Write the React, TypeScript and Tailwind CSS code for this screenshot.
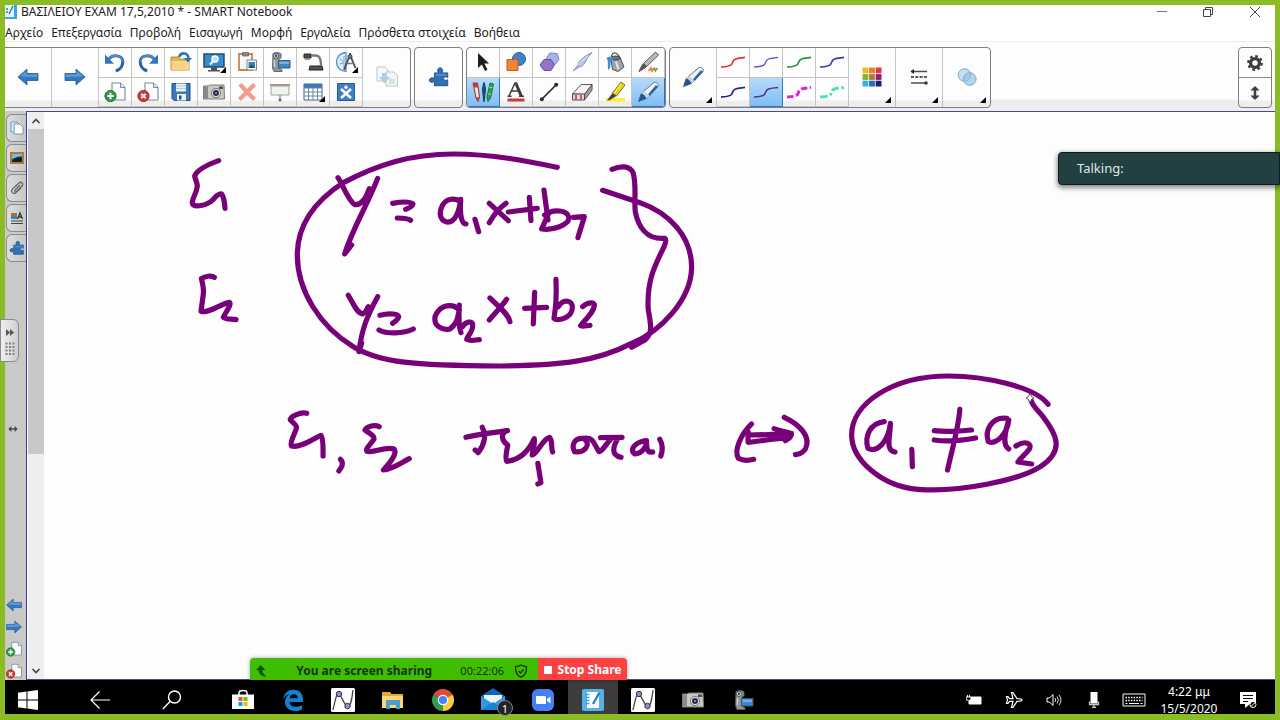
import type { ReactNode } from "react";

type IconProps = { children: ReactNode; className?: string; box?: string };

function Glyph({ children, className = "size-6", box = "0 0 24 24" }: IconProps) {
  return (
    <svg viewBox={box} className={className} fill="none" aria-hidden="true">
      {children}
    </svg>
  );
}

const arrowBody = "M2 12 11 4v4.5h11v7H11V20Z";

const ArrowLeft = ({ className }: { className?: string }) => (
  <Glyph className={className}>
    <path d={arrowBody} fill="#3578bd" stroke="#245a94" strokeWidth=".8" />
    <path d="M4 11.5 10.3 6v3.4h11V12Z" fill="#5d9ad6" />
  </Glyph>
);

const ArrowRight = ({ className }: { className?: string }) => (
  <Glyph className={className}>
    <g transform="matrix(-1 0 0 1 24 0)">
      <path d={arrowBody} fill="#3578bd" stroke="#245a94" strokeWidth=".8" />
      <path d="M4 11.5 10.3 6v3.4h11V12Z" fill="#5d9ad6" />
    </g>
  </Glyph>
);

const undoPath = (
  <>
    <path d="M5.5 9.5C9 4.500 19.500 4 19.800 12c0 4.500-3 7.500-7 9" stroke="#2a64a3" strokeWidth="3" />
    <path d="M5.500 9C9 4.200 19 4 19.300 12" stroke="#4f90d2" strokeWidth="1.600" />
    <path d="M2 4.500v9.200h9Z" fill="#3474b8" />
  </>
);
const Undo = () => <Glyph>{undoPath}</Glyph>;
const Redo = () => (
  <Glyph>
    <g transform="matrix(-1 0 0 1 24 0)">{undoPath}</g>
  </Glyph>
);

const sheet = (
  <>
    <path d="M9 3h8.500l4.500 4.500V20H9Z" fill="#fbfcfd" stroke="#7b8a96" strokeWidth="1.100" />
    <path d="M17.500 3v4.500H22" stroke="#7b8a96" fill="#dde6ec" />
  </>
);
const PageAdd = ({ className }: { className?: string }) => (
  <Glyph className={className}>
    {sheet}
    <circle cx="7.500" cy="16" r="5.600" fill="#2f9a4a" stroke="#1d6f31" />
    <path d="M7.500 12.800v6.400M4.300 16h6.400" stroke="#fff" strokeWidth="1.900" />
  </Glyph>
);
const PageDelete = ({ className }: { className?: string }) => (
  <Glyph className={className}>
    {sheet}
    <circle cx="7.500" cy="16" r="5.600" fill="#d23c30" stroke="#9c241b" />
    <path d="m5.300 13.800 4.400 4.400m0-4.400-4.400 4.400" stroke="#fff" strokeWidth="1.900" />
  </Glyph>
);
const FolderOpen = () => (
  <Glyph>
    <path d="M2 7h7l2 2h9v11H2Z" fill="#e3b352" stroke="#b58a33" />
    <path d="M2.500 11H20v9H2.500Z" fill="#f6d588" />
    <path d="M10 7c2-5 9-5 9.500 1.500" stroke="#2f74b6" strokeWidth="2.600" />
    <path d="M15 8h8l-4 4.500Z" fill="#2f74b6" />
  </Glyph>
);
const Save = () => (
  <Glyph>
    <path d="M3 3.500h18v17H5l-2-2Z" fill="#3b78bc" stroke="#234e81" />
    <path d="M7 3.500h10v8H7Z" fill="#eaf1f7" />
    <path d="M8 14h9v6.500H8Z" fill="#f1f4f7" />
    <path d="M10 15.500h2.500v4H10Z" fill="#274f80" />
    <path d="M7 6h10M7 8.500h10" stroke="#a4bfd9" strokeWidth=".8" />
  </Glyph>
);
const Monitor = () => (
  <Glyph>
    <path d="M2 4h20v13H2Z" fill="#2f8fd0" stroke="#2c4963" strokeWidth="1.500" />
    <path d="M9 17h6v3H9ZM6 20h12v1.500H6Z" fill="#4a5662" />
    <circle cx="13" cy="9" r="3" fill="#bfe3f7" stroke="#fff" strokeWidth="1.500" />
    <path d="M11 11.500 8 14.500" stroke="#fff" strokeWidth="2" />
  </Glyph>
);
const Camera = () => (
  <Glyph>
    <path d="M1.500 6h5l1-1H22l.5 14h-21Z" fill="#c8c8c5" stroke="#7b7b78" />
    <path d="M2 6.500h4v12H2Z" fill="#8a8a88" />
    <path d="M17 6.500h4v2.500h-4Z" fill="#454d54" />
    <circle cx="14" cy="13" r="4.600" fill="#e4e4e2" stroke="#73736f" />
    <circle cx="14" cy="13" r="3" fill="#252d44" />
    <circle cx="14" cy="13" r="1.100" fill="#839bd0" />
  </Glyph>
);
const Paste = () => (
  <Glyph>
    <path d="M4 4h13v16H4Z" fill="#f6f7f7" stroke="#c9854b" strokeWidth="1.800" />
    <path d="M7.500 2.500h6v3.500h-6Z" fill="#7f8992" stroke="#59626a" strokeWidth=".7" />
    <path d="M12 10h9.500v10H12Z" fill="#fff" stroke="#7d8791" />
    <path d="M13.500 12h6.500v6h-6.500Z" fill="#3286c8" />
    <path d="m13.500 18 3-3.500 3.500 3.500Z" fill="#234d40" />
  </Glyph>
);
const Cross = () => (
  <Glyph>
    <path d="M4 5.500 6.500 3.500 12 9.500l6-6L20.500 6l-6 6 6 6-2.500 2.500-6-6-6 6L3.500 18l6-6Z" fill="#f0a08d" stroke="#e08872" strokeWidth=".7" />
  </Glyph>
);
const Camcorder = () => (
  <Glyph>
    <path d="M5 3.500C8 2 12 2.500 13 4v4l-2 1v9l3 2v1.500H6L4.500 18Z" fill="#8d959a" stroke="#555e63" strokeWidth=".9" />
    <circle cx="8" cy="5.800" r="2.600" fill="#dde3e7" stroke="#4c555b" />
    <circle cx="8" cy="5.800" r="1.200" fill="#2b3b4c" />
    <path d="M6.500 10v7" stroke="#cdd3d6" strokeWidth="1.500" />
    <path d="M10.500 10.500H22V18H10.500Z" fill="#3c86cd" stroke="#49545e" />
    <path d="M11.500 11.500H21v2.500h-9.500Z" fill="#6fb1e8" />
  </Glyph>
);
const Easel = () => (
  <Glyph>
    <path d="M2 4h20v2H2Z" fill="#a3957c" />
    <path d="M3 6h18v9H3Z" fill="#eff6f1" stroke="#9fa69c" />
    <path d="M12 15v5" stroke="#82858a" strokeWidth="1.200" />
    <circle cx="12" cy="20" r="1.500" fill="#65696d" />
  </Glyph>
);
const DocCamera = () => (
  <Glyph>
    <path d="M3 4h7v4H3Z" fill="#4b4b4b" stroke="#2c2c2c" />
    <path d="M10 5.500h5c4 0 5 4 5 10" stroke="#777" strokeWidth="2.300" />
    <path d="M9 16h12l1 4H8Z" fill="#555" stroke="#222" />
    <path d="M4 9.500h5" stroke="#999" />
  </Glyph>
);
const TableIcon = () => (
  <Glyph>
    <path d="M3 4h18v16H3Z" fill="#fff" stroke="#44678c" />
    <path d="M3 4h18v4H3Z" fill="#3b78bc" />
    <path d="M3 8h18M3 12h18M3 16h18M7.500 8v12M12 8v12M16.500 8v12" stroke="#6a87a5" />
  </Glyph>
);
const Measure = () => (
  <Glyph>
    <path d="M12 2.500a9.500 9.500 0 0 0 0 19Z" fill="#dbeaf5" stroke="#5a90bd" strokeWidth="1.300" />
    <path d="M10 6v12M6 9l4 3M5.500 14l4-1" stroke="#79a7cd" />
    <path d="M16 3v4M15.500 6 10 20M16.500 6l5 12" stroke="#4d4d4d" strokeWidth="1.900" />
    <path d="M13 13.500h7" stroke="#777" strokeWidth="1.300" />
    <circle cx="16" cy="6.500" r="2" fill="#777" stroke="#444" />
  </Glyph>
);
const ShapeX = () => (
  <Glyph>
    <path d="M3.500 3.500h17v17h-17Z" fill="#3c7fc4" stroke="#265a92" />
    <path d="m7 9 10 9M17 9 7 18" stroke="#fff" strokeWidth="2.600" />
    <circle cx="12" cy="7.300" r="1.700" fill="#fff" />
  </Glyph>
);
const PagesFaded = () => (
  <Glyph className="size-6">
    <g opacity=".5">
      <path d="M2 2h8l3 3v11H2Z" fill="#eef2f4" stroke="#84939d" />
      <path d="M11 7h8l3.500 3.500V21H11Z" fill="#e6eef1" stroke="#84939d" />
      <path d="M7 8h5v4h3.500L9.500 18.500 4 12h3Z" fill="#66a0c8" />
      <path d="M14 14h6v5h-6Z" fill="#a8cdbb" />
    </g>
  </Glyph>
);
const Puzzle = ({ className }: { className?: string }) => (
  <Glyph className={className}>
    <path
      d="M7 7.500h4.500C9.500 4.500 11 2 13.200 2s3.800 2.500 1.800 5.500h6.500v5c-2.500-1.500-4.500-.5-4.500 1.200s2 2.800 4.500 1.300V21.500H7V17c-2.500 1.500-5.500 1-5.500-1.500S4.500 12 7 13.500Z"
      fill="#2f6fb2"
      stroke="#1d4f88"
    />
    <path d="M8 8.500h12.500v2.500H8Z" fill="#4d8ccb" />
  </Glyph>
);
const Pointer = () => (
  <Glyph>
    <path d="M7 3v15l3.800-3.500L14 21l2.500-1.200L13.300 13.500H18Z" fill="#1c1c1c" />
  </Glyph>
);
const Shapes = () => (
  <Glyph>
    <circle cx="15" cy="9" r="6.500" fill="#3f82c6" stroke="#27609c" />
    <path d="M3 9.500h11v11H3Z" fill="#f08436" stroke="#c95b14" />
  </Glyph>
);
const Polygons = () => (
  <Glyph>
    <path d="m13 3 7 .5 2 6-4 5h-6L9.500 8Z" fill="#a5b4ec" stroke="#7182c6" />
    <path d="M7 9.500h7l3.500 5.500L14 20.500H7L3 15Z" fill="#9670c9" stroke="#6a4b9c" />
  </Glyph>
);
const Quill = () => (
  <Glyph>
    <path d="M22 2.500C17 5 8.500 9.500 8 15l-5 6 6-4c5-.5 7-6 8-8.500Z" fill="#b7c3d9" stroke="#8594b1" />
    <path d="M18 6C14 9 10.500 12 8.500 15" stroke="#e8edf5" />
  </Glyph>
);
const Bucket = () => (
  <Glyph>
    <path d="M8 9 17 7l4 10-6 4.500-5.500-2Z" fill="#9da3a6" stroke="#4e5558" />
    <path d="m12 12 2.500 8 2-1L14 11Z" fill="#dde1e3" />
    <ellipse cx="12.500" cy="8" rx="4.800" ry="2" fill="#6d7477" stroke="#43494c" />
    <path d="M8.500 8C8 3.500 11 2 13.500 3.500S16.500 7 17 8" stroke="#4e5558" strokeWidth="1.200" />
    <path d="M3.500 8c2-2 6-1.500 9.500.5-4 .5-5 2-5.500 5 0 3-.5 5.500-2 6.500C4 18 6 11 3.500 8Z" fill="#3f8fd5" />
  </Glyph>
);
const MagicPen = () => (
  <Glyph>
    <path d="M19.500 2 22.500 5 9 18l-6 3.500L6 15Z" fill="#b7b9ba" stroke="#525557" />
    <path d="M8 13.500 10.500 16 3 21.500Z" fill="#4a4a4a" />
    <path d="m12.500 21 2.500-3 1 3 2.500-3.500" stroke="#ef7f30" strokeWidth="1.800" />
    <path d="m18.500 18 .8 3 2.200-3" stroke="#6aa84f" strokeWidth="1.600" />
  </Glyph>
);
const Pens = () => (
  <Glyph>
    <path d="M2 3h4.500l2 14L7 21.500 5 18Z" fill="#e9e3e1" stroke="#983027" />
    <path d="M2 3h4.500l.6 4.500H3Z" fill="#ce372b" />
    <path d="m5 17 3 .2-1 4.500Z" fill="#ce372b" />
    <path d="M13 2.500 14.500 9l-1.500 13-1.500-13Z" fill="#1d5588" stroke="#133f6b" strokeWidth="1.200" />
    <path d="m19 3 3.500 1-3 14-2.500 3.500-1-4.500Z" fill="#2ca455" stroke="#16713a" />
    <path d="m18 7 3.500.7m-4.500 6 3 .6" stroke="#9be0ad" />
  </Glyph>
);
const TextTool = () => (
  <Glyph>
    <path d="m5 16 6-13h1.500l5.500 13m-3.500-5h-7M3.500 16.200h4m7.500 0h5" stroke="#3d3d3d" strokeWidth="1.500" />
    <path d="m12 4 5 12" stroke="#3d3d3d" strokeWidth="2.600" />
    <path d="M3.500 18.500h17v3h-17Z" fill="#c63a3a" />
  </Glyph>
);
const LineTool = () => (
  <Glyph>
    <path d="M5 19 19 5" stroke="#2c2c2c" strokeWidth="1.700" />
    <circle cx="4.800" cy="19.200" r="2" fill="#2c2c2c" />
    <circle cx="19.200" cy="4.800" r="2" fill="#2c2c2c" />
  </Glyph>
);
const Eraser = () => (
  <Glyph>
    <path d="M2.500 14 11 4.500h11l-7.500 10Z" fill="#f4f4f3" stroke="#5c5c5c" />
    <path d="M14.500 14.500 22 4.500V10l-7.500 10Z" fill="#a5a5a3" stroke="#4a4a4a" />
    <path d="M2.500 14h12v6h-12Z" fill="#ded9d7" stroke="#4a4a4a" />
    <path d="M6 14.500v5M11 14.500v5" stroke="#c34133" strokeWidth="1.600" />
  </Glyph>
);
const Highlighter = () => (
  <Glyph>
    <path d="M3 18h19v3.500H3Z" fill="#fff02c" />
    <path d="m18 2 4 3-8.500 11-4-3Z" fill="#e9d518" stroke="#7d7421" />
    <path d="m9.500 13 4 3L7 20l-3 .5Z" fill="#43433c" />
    <path d="m18 4.500-7 9" stroke="#fff87b" />
  </Glyph>
);
const PenIcon = ({ className }: { className?: string }) => (
  <Glyph className={className}>
    <path d="M18 2.500c2-.8 5 1.500 4.300 3.700L10.500 18.500 2.500 21.500 5.200 13.500Z" fill="#f1f5f8" stroke="#5c7188" />
    <path d="M5.200 13.500c2 0 5 2.700 5.300 5l-8 3Z" fill="#1f5690" />
    <path d="M7.500 11.200c2.500.5 5 3 5.500 4.800l-2.500 2.500c-.5-2.200-3.300-4.800-5.300-5Z" fill="#c9d3dc" />
    <path d="m21 5.800-8 9.200" stroke="#2f659e" strokeWidth="2.600" />
  </Glyph>
);
const Stroke = ({ color, width = 1.6, dash }: { color: string; width?: number; dash?: string }) => (
  <Glyph>
    <path
      d="M0 17c4-.2 8.500-.3 10.500-2.500 1.500-2 .5-4 4-5.500 3-1 6-1 9.500-1.600"
      stroke={color}
      strokeWidth={width}
      strokeDasharray={dash}
    />
  </Glyph>
);
const swatches = ["#f3b91d", "#ec7d34", "#e23643", "#86b432", "#a87c38", "#8d1f70", "#39b1e4", "#2171b8", "#1d2168"];
const Palette = () => (
  <Glyph className="size-6">
    {swatches.map((c, i) => (
      <rect key={c} x={2.5 + (i % 3) * 6.6} y={2.5 + Math.floor(i / 3) * 6.6} width="5.800" height="5.800" fill={c} />
    ))}
  </Glyph>
);
const LineStyles = () => (
  <Glyph className="size-6">
    <path d="M4 6.500h16M4 18h16" stroke="#4d4d4d" strokeWidth="1.400" />
    <path d="M4 12h16" stroke="#222" strokeWidth="1.600" strokeDasharray="3 1.300" />
    <path d="M3.500 6.500 7 4v5Z" fill="#222" />
    <circle cx="19" cy="18" r="1.700" fill="#333" />
  </Glyph>
);
const Transparency = () => (
  <Glyph className="size-6">
    <circle cx="9.500" cy="10" r="6.300" fill="#c8deef" stroke="#7fa9cb" />
    <circle cx="14.800" cy="14" r="6.300" fill="#8dbfe4" fillOpacity=".65" stroke="#7fa9cb" />
  </Glyph>
);
const Gear = () => (
  <Glyph className="size-5">
    <circle cx="12" cy="12" r="5.300" stroke="#3d3d3d" strokeWidth="4" />
    <circle cx="12" cy="12" r="8" stroke="#3d3d3d" strokeWidth="3" strokeDasharray="3.140 3.140" />
  </Glyph>
);
const UpDown = () => (
  <Glyph className="size-5">
    <path d="M12 7v10" stroke="#3d3d3d" strokeWidth="3" />
    <path d="m12 3.500 5.500 5.500h-11ZM12 20.500 6.500 15h11Z" fill="#3d3d3d" />
  </Glyph>
);

type Tool = { name: string; icon: ReactNode; menu?: boolean; active?: boolean };

function Corner() {
  return (
    <svg viewBox="0 0 6 6" className="absolute right-1 bottom-1 size-1.5" aria-hidden="true">
      <path d="M6 0v6H0Z" fill="#000" />
    </svg>
  );
}

function ToolGrid({ tools, columns }: { tools: Tool[]; columns: string }) {
  return (
    <div className={`grid grid-rows-2 ${columns}`}>
      {tools.map((t) => (
        <button
          key={t.name}
          aria-label={t.name}
          aria-pressed={t.active}
          className={`relative flex w-[33px] items-center justify-center border-r border-b ${
            t.active ? "border-[#2f79b8] bg-linear-to-b from-[#b5dbfb] to-[#7fbdf6]" : "border-[#c4c4c4]"
          }`}
        >
          {t.icon}
          {t.menu && <Corner />}
        </button>
      ))}
    </div>
  );
}

function WideTool({ name, menu, children }: { name: string; menu?: boolean; children: ReactNode }) {
  return (
    <button
      aria-label={name}
      className="relative flex w-[47px] items-center justify-center border-r border-[#c4c4c4] pb-0.5 last:border-r-0"
    >
      {children}
      {menu && <Corner />}
    </button>
  );
}

const groupClass =
  "flex h-[61px] overflow-hidden rounded-[4px] border border-[#7d7d7d] bg-[linear-gradient(#fdfdfd_52px,#eeeeee_53px)]";

const fileTools: Tool[] = [
  { name: "Αναίρεση", icon: <Undo /> },
  { name: "Επανάληψη", icon: <Redo /> },
  { name: "Άνοιγμα", icon: <FolderOpen /> },
  { name: "Οθόνη", icon: <Monitor />, menu: true },
  { name: "Επικόλληση", icon: <Paste /> },
  { name: "Εγγραφή", icon: <Camcorder /> },
  { name: "Κάμερα εγγράφων", icon: <DocCamera /> },
  { name: "Μέτρηση", icon: <Measure />, menu: true },
  { name: "Προσθήκη σελίδας", icon: <PageAdd /> },
  { name: "Διαγραφή σελίδας", icon: <PageDelete /> },
  { name: "Αποθήκευση", icon: <Save /> },
  { name: "Λήψη", icon: <Camera /> },
  { name: "Διαγραφή", icon: <Cross /> },
  { name: "Σκίαση", icon: <Easel /> },
  { name: "Πίνακας", icon: <TableIcon />, menu: true },
  { name: "Response", icon: <ShapeX /> },
];

const drawTools: Tool[] = [
  { name: "Επιλογή", icon: <Pointer /> },
  { name: "Σχήματα", icon: <Shapes /> },
  { name: "Πολύγωνα", icon: <Polygons /> },
  { name: "Πένα", icon: <Quill /> },
  { name: "Γέμισμα", icon: <Bucket /> },
  { name: "Μαγική πένα", icon: <MagicPen /> },
  { name: "Πένες", icon: <Pens />, active: true },
  { name: "Κείμενο", icon: <TextTool /> },
  { name: "Γραμμή", icon: <LineTool /> },
  { name: "Γόμα", icon: <Eraser /> },
  { name: "Υπογράμμιση", icon: <Highlighter /> },
  { name: "Στυλό", icon: <PenIcon />, active: true },
];

const strokeTools: Tool[] = [
  { name: "Κόκκινη", icon: <Stroke color="#d8362f" /> },
  { name: "Μπλε λεπτή", icon: <Stroke color="#5a50c4" width={1.3} /> },
  { name: "Πράσινη", icon: <Stroke color="#2c9139" /> },
  { name: "Μπλε", icon: <Stroke color="#3238bb" /> },
  { name: "Σκούρα μπλε", icon: <Stroke color="#2a2890" width={1.8} /> },
  { name: "Μωβ", icon: <Stroke color="#5a2b97" width={1.5} />, active: true },
  { name: "Ματζέντα", icon: <Stroke color="#dd22d8" width={3} dash="6.500 2.300" /> },
  { name: "Τιρκουάζ", icon: <Stroke color="#50e0b8" width={3} dash="7.500 2.500 2.500 2.500" /> },
];

const menus = ["Αρχείο", "Επεξεργασία", "Προβολή", "Εισαγωγή", "Μορφή", "Εργαλεία", "Πρόσθετα στοιχεία", "Βοήθεια"];

function TitleBar() {
  return (
    <header className="bg-white">
      <div className="flex h-[17px] items-start">
        <svg viewBox="0 0 12 14" className="h-3.5 w-3" aria-hidden="true">
          <path d="M0 0h12v14H0Z" fill="#3fa5d8" />
          <path d="M0 0h9v12H0Z" fill="#e6f5fb" />
          <path d="M8 1 4 9M1 4h2M1 7h2" stroke="#2a79ac" strokeWidth="1.400" />
        </svg>
        <h1 className="ml-1 text-xs leading-[14px] whitespace-nowrap">ΒΑΣΙΛΕΙΟΥ EXAM 17,5,2010 * - SMART Notebook</h1>
        <div className="ml-auto flex text-[#555]">
          <button aria-label="Ελαχιστοποίηση" className="flex h-3.5 w-[46px] items-center justify-center">
            <svg viewBox="0 0 12 12" className="size-3" stroke="#777">
              <path d="M1 5.500h10" />
            </svg>
          </button>
          <button aria-label="Επαναφορά" className="flex h-3.5 w-[46px] items-center justify-center">
            <svg viewBox="0 0 12 12" className="size-3" stroke="#444" fill="none">
              <path d="M1.500 3.500h7v7h-7ZM3.500 3.500v-2h7v7h-2" />
            </svg>
          </button>
          <button aria-label="Κλείσιμο" className="flex h-3.5 w-11 items-center justify-center pl-1">
            <svg viewBox="0 0 12 12" className="size-3" stroke="#444">
              <path d="m1 1 10 10M11 1 1 11" />
            </svg>
          </button>
        </div>
      </div>
      <nav className="flex h-5 items-center gap-2 border-b border-[#ececec] pt-[3px]">
        {menus.map((m) => (
          <button key={m} className="text-xs leading-4 whitespace-nowrap">
            {m}
          </button>
        ))}
      </nav>
    </header>
  );
}

function Toolbar() {
  return (
    <div className="flex gap-[3px] bg-[linear-gradient(#fdfdfd_57px,#ededed_58px)] pt-[5px] pb-[3px]">
      <div className={`${groupClass} rounded-l-none border-l-0`}>
        <WideTool name="Προηγούμενη σελίδα">
          <ArrowLeft className="size-6" />
        </WideTool>
        <WideTool name="Επόμενη σελίδα">
          <ArrowRight className="size-6" />
        </WideTool>
        <ToolGrid tools={fileTools} columns="grid-cols-8" />
        <WideTool name="Σελίδες">
          <PagesFaded />
        </WideTool>
      </div>
      <div className={groupClass}>
        <WideTool name="Πρόσθετα">
          <Puzzle className="size-[22px]" />
        </WideTool>
      </div>
      <div className={groupClass}>
        <ToolGrid tools={drawTools} columns="grid-cols-6" />
      </div>
      <div className={groupClass}>
        <WideTool name="Τύπος πένας" menu>
          <PenIcon />
        </WideTool>
        <ToolGrid tools={strokeTools} columns="grid-cols-4" />
        <WideTool name="Χρώμα" menu>
          <Palette />
        </WideTool>
        <WideTool name="Στυλ γραμμής" menu>
          <LineStyles />
        </WideTool>
        <WideTool name="Διαφάνεια" menu>
          <Transparency />
        </WideTool>
      </div>
      <div className={`${groupClass} mr-[3px] ml-auto w-[34px] flex-col`}>
        <button aria-label="Ρυθμίσεις" className="flex flex-1 items-center justify-center border-b border-[#8a8a8a]">
          <Gear />
        </button>
        <button aria-label="Μετακίνηση γραμμής" className="flex flex-1 items-center justify-center">
          <UpDown />
        </button>
      </div>
    </div>
  );
}

const sideTabs: Tool[] = [
  {
    name: "Ταξινόμηση σελίδων",
    icon: (
      <Glyph className="size-4" box="0 0 16 16">
        <path d="M2 2h6l2 2v8H2Z" fill="#e3f1f5" stroke="#6d9caf" />
        <path d="M5 4h6l3 3v7H5Z" fill="#fff" stroke="#6d9caf" />
      </Glyph>
    ),
  },
  {
    name: "Συλλογή",
    icon: (
      <Glyph className="size-4" box="0 0 16 16">
        <path d="M2 3h12v10H2Z" fill="#20536d" stroke="#b3793c" strokeWidth="2" />
        <path d="M3 11c3-3 5-5 10-3v4H3Z" fill="#0f2225" />
        <path d="M3 4h10v2L8 7 3 9Z" fill="#73bed9" />
      </Glyph>
    ),
  },
  {
    name: "Συνημμένα",
    icon: (
      <Glyph className="size-4" box="0 0 16 16">
        <path
          d="M11 5 6 10c-1 1.200.5 2.500 1.500 1.500L13 6c2-2-1-5-3-3L3.500 9c-2.500 2.500 1 6 3.500 3.500L12 8"
          stroke="#666"
          strokeWidth="1.200"
        />
      </Glyph>
    ),
  },
  {
    name: "Ιδιότητες",
    icon: (
      <Glyph className="size-4" box="0 0 16 16">
        <path d="M2 3h3v3H2Z" fill="#d9562e" />
        <path d="M5 3h3v3H5Z" fill="#4a9c4a" />
        <path d="M2 6h6v3H2Z" fill="#3a7fc4" />
        <path d="m8.500 9 2.500-6 2.500 6m-4-2h3" stroke="#333" strokeWidth="1.300" />
        <path d="M2 11h12M2 13.500h12" stroke="#444" />
      </Glyph>
    ),
  },
  { name: "Πρόσθετα στοιχεία", icon: <Puzzle className="size-4" /> },
];

function Sidebar() {
  return (
    <aside className="relative flex w-[22px] shrink-0 flex-col border-r border-[#3c3a8c] bg-[#c9c9c9] pt-[3px]">
      <div className="flex flex-col gap-0.5 pl-px">
        {sideTabs.map((t) => (
          <button
            key={t.name}
            aria-label={t.name}
            className="flex h-7 items-center justify-center rounded-l-md border border-r-0 border-[#8b8b8b] bg-linear-to-r from-[#dedede] to-[#c6c6c6]"
          >
            {t.icon}
          </button>
        ))}
      </div>
      <button
        aria-label="Άνοιγμα πλευρικής γραμμής"
        className="absolute top-52 -left-[5px] flex h-[43px] w-[19px] items-center justify-center rounded-r-md border border-[#8a8a8a] bg-linear-to-r from-[#efefef] to-[#cfcfcf]"
      >
        <svg viewBox="0 0 12 32" className="h-8 w-3" aria-hidden="true">
          <path d="m2 4 4 3.500L2 11Zm4 0 4 3.500L6 11Z" fill="#555" />
          <path d="M1.500 18.500h9M1.500 22h9M1.500 25.500h9M1.500 29h9" stroke="#808080" strokeWidth="2" strokeDasharray="2 1.500" />
        </svg>
      </button>
      <button aria-label="Αλλαγή πλάτους" className="absolute top-[310px] left-px flex h-4 w-3.5 items-center justify-center">
        <svg viewBox="0 0 12 8" className="h-2 w-2.5" aria-hidden="true">
          <path d="M2 4h8" stroke="#444" strokeWidth="1.600" />
          <path d="M4 .5v7L.5 4ZM8 .5v7L11.500 4Z" fill="#444" />
        </svg>
      </button>
      <div className="mt-auto flex flex-col gap-1">
        <button aria-label="Προηγούμενη" className="h-[18px]">
          <ArrowLeft className="size-[18px]" />
        </button>
        <button aria-label="Επόμενη" className="h-[18px]">
          <ArrowRight className="size-[18px]" />
        </button>
        <button aria-label="Νέα σελίδα" className="h-[18px]">
          <PageAdd className="size-[18px]" />
        </button>
        <button aria-label="Διαγραφή" className="h-[18px]">
          <PageDelete className="size-[18px]" />
        </button>
      </div>
    </aside>
  );
}

function ScrollBar() {
  return (
    <div className="ml-px flex w-4 shrink-0 flex-col bg-[#eeeeee]">
      <button aria-label="Κύλιση πάνω" className="flex h-[17px] items-center justify-center">
        <svg viewBox="0 0 10 6" className="h-1.5 w-2.5" fill="none" stroke="#444" strokeWidth="1.700">
          <path d="m1.500 5 3.500-3.500L8.500 5" />
        </svg>
      </button>
      <div className="flex flex-1 flex-col">
        <div className="h-[61%] bg-[#c8c8c8]" />
      </div>
      <button aria-label="Κύλιση κάτω" className="flex h-[17px] items-center justify-center">
        <svg viewBox="0 0 10 6" className="h-1.5 w-2.5" fill="none" stroke="#444" strokeWidth="1.700">
          <path d="M1.500 1 5 4.500 8.500 1" />
        </svg>
      </button>
    </div>
  );
}

const systemStrokes = [
  "M116 62C80 75 50 92 44 108c2 12 8 20 8 30-2 22-16 37-15 52 3 13 43 8 61-10 10-12 20-20 27-18 7 10 9 28 10 43",
  "M103 412C95 406 75 408 64 416c4 14 8 29 6 46l-7 52c22 8 62-24 85-27 8 5-8 25-18 45 10 8 25 4 38 7",
  "M1132 82C1050 65 940 42 820 42 690 42 590 75 490 128 410 180 354 250 352 340c-2 110 68 220 168 280 80 48 180 56 440 58 190-2 290-14 395-68 85-35 180-130 180-230-1-90-65-160-155-192l-112-37",
  "M474 113c11 12 31 72 51 81 20 2 35-24 43-48M593 115C560 200 520 260 494 342l21-27",
  "M638 190c22-4 52-6 61 2-1 8-14 13-22 16M652 234c13 0 33 2 40 7",
  "M842 185c-17-13-42-10-54 10-13 25-8 45 12 51 25 4 38-31 42-68-2 27-2 72 16 74",
  "M885 238l11 37",
  "M928 190l57 52M978 190c-22 15-37 35-50 58",
  "M985 216l87-11M1048 172l5 70",
  "M1092 150l12 90M1094 225c26-20 71-15 73 10-2 20-47 37-82 32l19-42",
  "M1180 232l33-2c-5 20-13 40-19 63",
  "M1296 88c24-10 54-13 64 12 10 40 2 80 6 115 9 45 34 85 89 80q7 5-5 30c-30 60-50 105-45 185 7 40 15 70-10 90l-40 22",
  "M505 466c15 24 25 54 43 56 14-7 12-17 17-22M593 470c-33 60-48 100-56 165l8-25",
  "M600 526c30-8 55-4 56 4-1 8-11 15-18 20M597 570c23 12 73 12 103-3",
  "M838 510c-18-20-58-20-73 20-5 30 25 42 45 37 25-17 28-47 28-72-2 35-2 65 5 83",
  "M848 560c7-15 32-20 30-4 2 16-13 29-18 42 10 6 25 2 38 1",
  "M930 474c20 21 55 46 60 71M980 478c-15 22-35 42-52 62",
  "M1034 505l66-3M1064 457l-4 95",
  "M1128 418c2 42 0 82-6 117 8 10 53 0 55-30 3-25-27-30-42-5",
  "M1208 500c17-15 37-15 35-2-3 22-33 47-41 59 8 5 18-1 28-1",
];

const resultStrokes = [
  "M72 130c-12-5-34 10-32 20 5 8 12 15 12 22-2 18-14 43-10 56 18 7 43-23 58-32 5 9 4 44 4 62",
  "M138 268c8 12 2 24-3 35",
  "M214 170c-9-8-24 0-28 10 9 10 19 18 18 26-4 14-18 29-14 38 15 6 35-16 53-7 7 13-8 43-21 63 18-2 33-20 51-34",
  "M384 202c26-10 56-14 81-20M416 172c9 23 4 53-8 76l-6-8",
  "M465 182c-15 8-10 33 1 43-2 20-6 40-2 49 26-4 44-34 54-68 2 19-4 39-4 49 11-5 21-50 34-53 7 13 2 33 6 44",
  "M525 280l6 58-6 4",
  "M612 205c-15 0-22 20-15 40 18 5 35-20 18-40 20-5 20 20 30 40 10-5 15-30 27-42M648 203l42-1M682 205c-10 25-14 50 6 57",
  "M734 212c-22 8-29 28-19 40 15-2 23-22 23-40 0 18 0 38 12 34M764 208c6 16 6 34 2 50",
  "M944 162c-19 28-36 78-26 103q12 10 30 3",
  "M937 195c28 0 63-3 85-5M988 176c17 9 32 12 34 16 0 8-7 16-12 20M938 217c27-5 57-13 77-13M937 185v30",
  "M1008 142c32 23 52 58 42 93q-5 15-20 19",
  "M1525 103C1500 50 1400 18 1330 18c-110 0-190 82-190 177 0 75 60 155 130 163 80 10 200-28 240-68 50-50 30-100 5-150-10-20-20-30-23-48",
  "M1204 155c-29 5-39 45-32 80 18 15 40-20 44-75 0 40-11 80 9 86",
  "M1258 238l1 52",
  "M1302 182c28 4 48 2 73-2M1302 210c28 6 53 2 81-6M1352 118c-2 52-17 132-24 182",
  "M1444 145c-29-5-44 35-36 70 17 10 37-25 40-65-8 40-13 75 0 87",
  "M1462 228c18-18 33-8 26 10-8 17-18 27-22 38l27 6",
];

function Whiteboard() {
  return (
    <main className="relative min-w-0 flex-1 bg-[#fdfdfd]">
      <svg
        viewBox="44 112 1231 567"
        preserveAspectRatio="xMidYMin meet"
        className="block h-full w-full"
        role="img"
        aria-label="ε1: y = a1x + b1, ε2: y = a2x + b2; ε1, ε2 τέμνονται ⇔ a1 ≠ a2"
      >
        <g fill="none" stroke="#780078" strokeWidth="5.200" strokeLinecap="round" strokeLinejoin="round">
          <g transform="translate(180 140) scale(.3333)">
            {systemStrokes.map((d) => (
              <path key={d} d={d} vectorEffect="non-scaling-stroke" />
            ))}
          </g>
          <g transform="translate(270 370) scale(.5102 .3333)">
            {resultStrokes.map((d) => (
              <path key={d} d={d} vectorEffect="non-scaling-stroke" />
            ))}
          </g>
        </g>
        <path d="m1030 393 1.500 3.500 2.500 1.500-2.500 1.500-1.500 3.500-1.500-3.500-2.500-1.500 2.500-1.500Z" fill="#fff" stroke="#333" strokeWidth=".8" />
      </svg>
      <div className="absolute top-10 -right-[5px] flex h-[33px] w-[222px] items-center rounded-l-sm border border-[#0d1c1d] bg-[#223f41] pl-[18px] text-[13px] text-[#dfe8e8] shadow-[0_2px_5px_1px_rgba(0,0,0,0.45)]">
        Talking:
      </div>
      <div className="absolute -bottom-px left-[206px] flex h-[22px] w-[377px] overflow-hidden rounded-t-[4px] shadow-[0_0_4px_rgba(0,0,0,0.35)]">
        <div className="flex flex-1 items-center bg-[#3fbd00] pt-1 pr-2.5 pl-1.5 text-[#17350d]">
          <svg viewBox="0 0 12 12" className="size-3 shrink-0" aria-hidden="true">
            <path d="M4.500 0 9.500 5H6.500c0 3 1.500 5 4.500 6.500C6 12 2.500 9 2.500 5H0Z" fill="#0a5a0a" />
          </svg>
          <span className="flex-1 text-center text-xs leading-4 font-bold whitespace-nowrap">You are screen sharing</span>
          <span className="mr-2.5 text-[11px] leading-4">00:22:06</span>
          <svg viewBox="0 0 14 14" className="size-3.5 shrink-0" fill="none" stroke="#17350d" strokeWidth="1.300" aria-hidden="true">
            <path d="M7 1c2 1.300 3.500 1.600 5.500 1.700C12.700 8 11 11.500 7 13.200 3 11.500 1.300 8 1.500 2.700 3.500 2.600 5 2.300 7 1Z" />
            <path d="m4.500 7 2 2 3.200-3.800" />
          </svg>
        </div>
        <button className="flex w-[89px] items-center justify-center gap-1.5 bg-[#fb4141] pt-0.5 text-xs leading-4 font-bold whitespace-nowrap text-white">
          <span className="size-2 bg-white" />
          Stop Share
        </button>
      </div>
    </main>
  );
}

const GeoGebra = () => (
  <Glyph className="size-6">
    <rect width="24" height="24" rx="1.500" fill="#fff" />
    <path d="M2 22C5 8 6 5 8 6c3 2 5 12 9 12 3 0 4-8 5-16" stroke="#444" strokeWidth="1.300" />
    <circle cx="8" cy="6" r="2.700" fill="#8d8de0" stroke="#333" />
    <circle cx="16.500" cy="18" r="2.700" fill="#8d8de0" stroke="#333" />
  </Glyph>
);

const apps: Tool[] = [
  {
    name: "Store",
    icon: (
      <Glyph>
        <path d="M8 7V5c0-3.500 8-3.500 8 0v2" stroke="#fff" strokeWidth="1.500" />
        <path d="M1 6.500h22V21H1Z" fill="#fff" />
        <path d="M7.500 9h4v4h-4Z" fill="#f05125" />
        <path d="M12.500 9h4v4h-4Z" fill="#7fba00" />
        <path d="M7.500 14h4v4h-4Z" fill="#00a1ee" />
        <path d="M12.500 14h4v4h-4Z" fill="#ffb800" />
      </Glyph>
    ),
  },
  {
    name: "Edge",
    icon: (
      <Glyph>
        <path
          d="M2 11.500C3 5 7 1.800 12.500 1.800 18.500 1.800 22 6 22 11.500V14H8.500c.3 5.500 7.500 6 12.500 3.200v4.300c-6.500 3.200-17 1.500-17-7.500 0-4 2-6.500 5-8-4 .5-6 3-7 5.500Zm6.700-1.300h8.100C16.800 4.800 9 5 8.700 10.200Z"
          fill="#1580d2"
        />
      </Glyph>
    ),
  },
  { name: "GeoGebra", icon: <GeoGebra /> },
  {
    name: "Explorer",
    icon: (
      <Glyph>
        <path d="M1 4h8l1.500 2H22v14H1Z" fill="#e2a93b" />
        <path d="M1 8h21v12H1Z" fill="#fbd671" />
        <path d="M5 12h14v9h-4v-4H9v4H5Z" fill="#4a9fd0" />
      </Glyph>
    ),
  },
  {
    name: "Chrome",
    icon: (
      <Glyph>
        <path d="M12 12 2.470 6.500A11 11 0 0 1 21.530 6.500Z" fill="#df4a3c" />
        <path d="M12 12 21.530 6.500A11 11 0 0 1 12 23Z" fill="#fbcb38" />
        <path d="M12 12V23A11 11 0 0 1 2.470 6.500Z" fill="#2f9c51" />
        <circle cx="12" cy="12" r="5.300" fill="#fff" />
        <circle cx="12" cy="12" r="4.100" fill="#4384f0" />
      </Glyph>
    ),
  },
  {
    name: "Mail",
    icon: (
      <span className="relative inline-flex">
        <Glyph>
          <path d="M0 8 12 0l12 8v14H0Z" fill="#1565b0" />
          <path d="M3 7h18v9H3Z" fill="#eef5fb" />
          <path d="m0 8 12 8 12-8v14H0Z" fill="#2b9be8" />
          <path d="m0 22 12-8 12 8Z" fill="#1b82d1" />
        </Glyph>
        <span className="absolute -right-2 -bottom-1 flex size-4 items-center justify-center rounded-full border border-[#888] bg-[#1e2327] text-[11px] leading-none text-white">
          1
        </span>
      </span>
    ),
  },
  {
    name: "Zoom",
    icon: (
      <Glyph>
        <rect x="1" y="1" width="22" height="22" rx="6" fill="#4280f4" />
        <path d="M5 8h8.500q1.500 0 1.500 1.500V16H6.500Q5 16 5 14.500ZM16 11l3.500-2.500v7L16 13Z" fill="#fff" />
      </Glyph>
    ),
  },
  {
    name: "SMART Notebook",
    active: true,
    icon: (
      <Glyph>
        <rect x="1" y="1" width="22" height="22" rx="2" fill="#55b3e3" />
        <path d="M6 4h12v16H6Z" fill="#fff" />
        <path d="M4.500 6.500h4M4.500 9.500h4M4.500 12.500h4M4.500 15.500h4" stroke="#3e9cd0" strokeWidth="1.300" />
        <path d="M18.500 4.500 12 16" stroke="#2b83ba" strokeWidth="2.400" />
      </Glyph>
    ),
  },
  { name: "GeoGebra Classic", icon: <GeoGebra /> },
  { name: "SMART Capture", icon: <Camera /> },
  { name: "SMART Recorder", icon: <Camcorder /> },
];

const tray: Tool[] = [
  {
    name: "Μπαταρία",
    icon: (
      <Glyph className="size-4" box="0 0 16 16">
        <path d="M5 5h10v7H3V9" fill="#fff" stroke="#fff" />
        <path d="M0 5h5v2.500q-2.500 2-5 0ZM1.500 5V3m2 2V3" stroke="#fff" fill="#000" />
      </Glyph>
    ),
  },
  {
    name: "Λειτουργία πτήσης",
    icon: (
      <Glyph className="size-[18px]" box="0 0 18 18">
        <path
          d="M17 9c0-1-1.500-1.300-5-1.300L8 1.500H6.500L8 7.700H4.500L3 5.500H1.500L2.500 9l-1 3.500H3l1.500-2.200H8l-1.500 6.200H8l4-6.200c3.500 0 5-.3 5-1.300Z"
          stroke="#fff"
          strokeWidth="1.200"
        />
      </Glyph>
    ),
  },
  {
    name: "Ήχος",
    icon: (
      <Glyph className="size-4" box="0 0 16 16">
        <path d="M1 6h2.500L7 2.500v11L3.500 10H1Z" stroke="#fff" />
        <path d="M9 6q1.500 2 0 4M11 4.500q2.700 3.500 0 7M13 3q4 5 0 10" stroke="#ddd" />
      </Glyph>
    ),
  },
  {
    name: "Μικρόφωνο",
    icon: (
      <Glyph className="size-4" box="0 0 16 16">
        <path d="M4.500 0h7v11.500h-7Z" fill="#fff" />
        <path d="M3.500 9.500v3h9v-3M8 12.500V16M6 15.500h4" stroke="#ccc" strokeWidth="1.300" />
      </Glyph>
    ),
  },
  {
    name: "Πληκτρολόγιο",
    icon: (
      <svg viewBox="0 0 24 14" className="h-3.5 w-6" fill="none" stroke="#fff" aria-hidden="true">
        <path d="M1 1h22v12H1Z" />
        <path d="M3.500 4.500h17M3.500 7.500h17" strokeDasharray="1.500 1.200" strokeWidth="1.300" />
        <path d="M7 10.500h10M3.500 10.500h2M18.500 10.500h2" />
      </svg>
    ),
  },
];

function Taskbar() {
  return (
    <footer className="flex h-[34px] items-stretch bg-black text-white">
      <button aria-label="Έναρξη" className="flex w-[46px] items-center justify-center pt-1.5">
        <Glyph className="size-5" box="0 0 20 20">
          <path d="M0 2.700 8.500 1.500v8H0ZM9.500 1.400 20 0v9.500H9.500ZM0 10.500h8.500v8L0 17.300ZM9.500 10.500H20V20L9.500 18.600Z" fill="#fff" />
        </Glyph>
      </button>
      <button aria-label="Πίσω" className="ml-[26px] flex w-[46px] items-center justify-center pt-1.5">
        <Glyph className="size-5" box="0 0 20 20">
          <path d="M20 10H1M9.500 1.500 1 10l8.500 8.500" stroke="#fff" strokeWidth="1.200" />
        </Glyph>
      </button>
      <button aria-label="Αναζήτηση" className="ml-[26px] flex w-[46px] items-center justify-center pt-1.5">
        <Glyph className="size-5" box="0 0 20 20">
          <circle cx="12.500" cy="7" r="6" stroke="#fff" strokeWidth="1.400" />
          <path d="M8.300 11.300.8 19" stroke="#fff" strokeWidth="1.400" />
        </Glyph>
      </button>
      <div className="ml-[23px] flex">
        {apps.map((a) => (
          <button
            key={a.name}
            aria-label={a.name}
            className={`flex w-[50px] items-center justify-center pt-1.5 ${a.active ? "bg-[#3d3d3d]" : ""}`}
          >
            {a.icon}
          </button>
        ))}
      </div>
      <div className="ml-auto flex">
        {tray.map((t) => (
          <button key={t.name} aria-label={t.name} className="flex w-10 items-center justify-center pt-1.5">
            {t.icon}
          </button>
        ))}
        <button className="flex w-[70px] flex-col items-center justify-start pt-[3px] text-xs leading-[17px] whitespace-nowrap">
          <span>4:22 μμ</span>
          <span>15/5/2020</span>
        </button>
        <button aria-label="Ειδοποιήσεις" className="flex w-[51px] items-center justify-center pt-1.5 pr-1">
          <Glyph className="size-[18px]" box="0 0 18 18">
            <path d="M1 1h16v12h-6l-5 4v-4H1Z" fill="#fff" />
            <path d="M4 4.500h10M4 7.500h10M4 10.500h5" stroke="#000" strokeWidth="1.200" />
            <circle cx="14" cy="13.500" r="3" fill="#000" stroke="#fff" />
            <path d="m12 15.500 4-4" stroke="#fff" />
          </Glyph>
        </button>
      </div>
    </footer>
  );
}

export default function App() {
  return (
    <div className="flex h-screen flex-col border-[5px] border-b-[6px] border-[#8bbb25] bg-[#fdfdfd] font-['Noto_Sans','Open_Sans',sans-serif] text-[#1b1b1b]">
      <TitleBar />
      <Toolbar />
      <div className="flex min-h-0 flex-1">
        <Sidebar />
        <div className="flex min-w-0 flex-1 border-t border-b border-[#4a4890]">
          <ScrollBar />
          <Whiteboard />
        </div>
      </div>
      <Taskbar />
    </div>
  );
}
